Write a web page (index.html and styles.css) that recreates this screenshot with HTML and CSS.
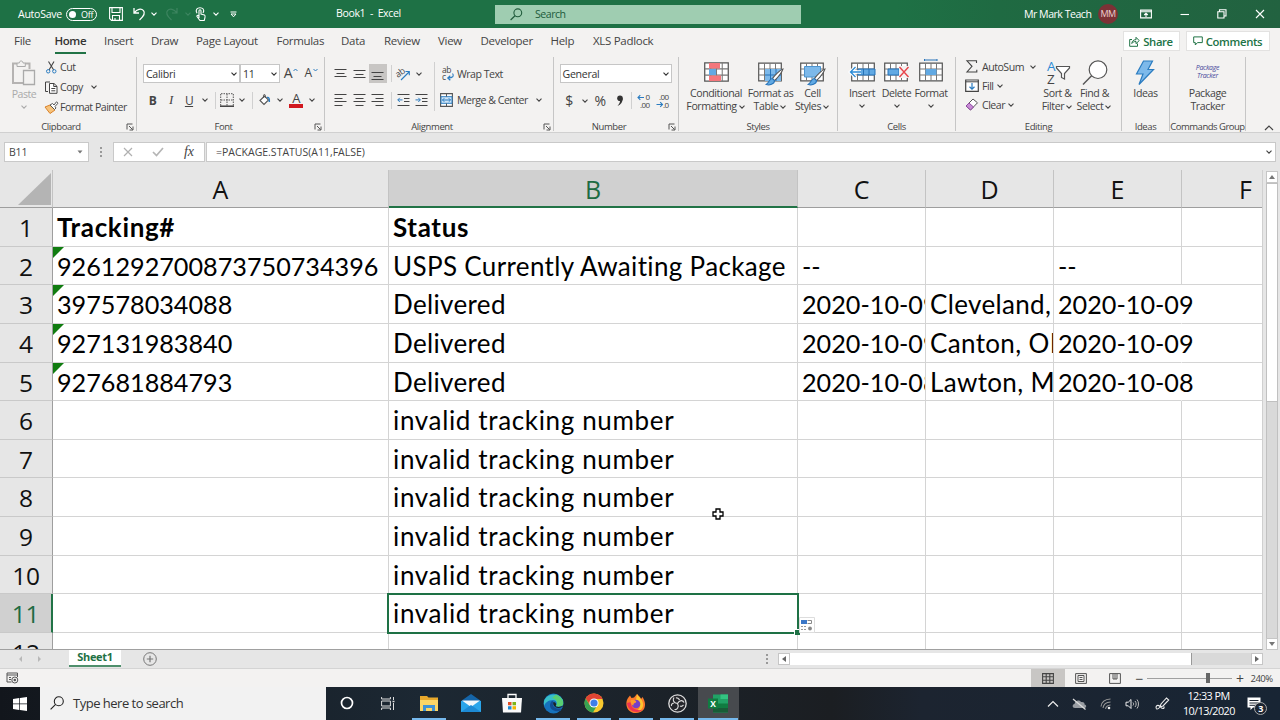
FILE: index.html
```html
<!DOCTYPE html>
<html lang="en">
<head>
    <meta charset="UTF-8">
    <meta name="viewport" content="width=device-width, initial-scale=1.0">
    <title>Book1 - Excel</title>
    <link rel="stylesheet" href="styles.css">
</head>
<body>
    <svg class="defs">
      <symbol id="chev" viewBox="0 0 8 8"><path d="M1.5 2.7 L4 5.2 L6.5 2.7" fill="none" stroke="currentColor" stroke-width="1.1"/></symbol>
      <symbol id="launch" viewBox="0 0 8 8"><path d="M1 6.5V1H6.5 M3 3L6.6 6.6 M7 3.5V7H3.5" fill="none" stroke="#555" stroke-width="1"/></symbol>
      <symbol id="grid" viewBox="0 0 24 19"><path d="M.7 .7H23.3V18.3H.7Z" fill="#fff" stroke="#555" stroke-width="1.2"/><path d="M.7 6.5H23.3M.7 12.5H23.3M6.5 .7V18.3M12 .7V18.3M17.5 .7V18.3" stroke="#777" stroke-width="1"/></symbol>
      <symbol id="brush" viewBox="0 0 18 17"><path d="M17 1C14 2 9 7 7 10L9 12C12 9 16 4 17 1Z" fill="#fff" stroke="#555"/><path d="M7 10C4 10 4 14 1 15.5C4 17 9 15 9 12Z" fill="#61a9e3" stroke="#2673b8"/></symbol>
    </svg>

    <div class="titlebar">
      <span class="autosave">AutoSave</span>
      <span class="toggle"><i></i>Off</span>
      <svg class="t-save" width="14" height="14" viewBox="0 0 14 14"><path d="M.6 .6H13.4V13.4H2.5L.6 11.5ZM3 .6V5.5H11V.6M3.5 13V8.5H10.5V13M6 11V13" fill="none" stroke="#fff" stroke-width="1.1"/></svg>
      <svg class="t-undo" width="13" height="14" viewBox="0 0 13 14"><path d="M1 1V6H6M1.3 5.7C4 2.3 8 1 10.5 3.6C12.5 6 11.5 8.5 6.5 13" fill="none" stroke="#fff" stroke-width="1.3"/></svg>
      <svg class="t-chev1" width="8" height="8"><use href="#chev"/></svg>
      <svg class="t-redo" width="13" height="14" viewBox="0 0 13 14"><path d="M12 1V6H7M11.7 5.7C9 2.3 5 1 2.5 3.6C.5 6 1.5 8.5 6.5 13" fill="none" stroke="#3d8560" stroke-width="1.2"/></svg>
      <svg class="t-chev2" width="8" height="8"><use href="#chev"/></svg>
      <svg class="t-touch" width="12" height="15" viewBox="0 0 12 15"><path d="M4 11V3.8C4 2.3 6 2.3 6 3.8V7L9.5 8C10.5 8.4 10 11 9.2 13.5H5L2 9.5C1.5 8.2 3 8 4 9.3M2 6.3C-.2 2.5 2.5 .7 5 .7S10 2.5 8 6" fill="none" stroke="#fff" stroke-width="1.1"/></svg>
      <svg class="t-chev1 touch" width="8" height="8"><use href="#chev"/></svg>
      <svg class="t-custom" width="7" height="7" viewBox="0 0 7 7"><path d="M.5 1H6.5M1 3H6L3.5 5.8Z" fill="none" stroke="#fff"/></svg>
      <span class="doc-name">Book1&nbsp; -&nbsp; Excel</span>
      <div class="search">
        <svg width="13" height="13" viewBox="0 0 13 13"><circle cx="7.8" cy="4.8" r="3.9" fill="none" stroke="#215c3c" stroke-width="1.1"/><path d="M5 7.7L.6 12" stroke="#215c3c" stroke-width="1.2"/></svg>
        <span>Search</span>
      </div>
      <span class="user">Mr Mark Teach</span>
      <span class="avatar">MM</span>
      <div class="window-buttons">
        <svg width="12" height="10" viewBox="0 0 12 10"><path d="M.6 1.1H11.4V8.9H.6ZM.6 2.8H11.4M6 8V4.5M4.2 6L6 4.2L7.8 6" fill="none" stroke="#fff" stroke-width="1.1"/></svg>
        <svg width="10" height="10" viewBox="0 0 10 10"><path d="M.5 5.5H9" stroke="#fff" stroke-width="1.1"/></svg>
        <svg width="10" height="10" viewBox="0 0 10 10"><path d="M.8 2.7H7V9H.8ZM2.5 2.5V.8H9V7H7.2" fill="none" stroke="#fff" stroke-width="1.1"/></svg>
        <svg width="10" height="10" viewBox="0 0 10 10"><path d="M1 1L9 9M9 1L1 9" stroke="#fff" stroke-width="1.1"/></svg>
      </div>
    </div>

    <div class="tabs">
      <div class="tab-list">
        <span>File</span><span class="active">Home</span><span>Insert</span><span>Draw</span><span>Page Layout</span><span>Formulas</span><span>Data</span><span>Review</span><span>View</span><span>Developer</span><span>Help</span><span>XLS Padlock</span>
      </div>
      <button class="share"><svg width="11" height="11" viewBox="0 0 11 11"><path d="M3 3.5H.7V10.3H8.5V7.5M2.8 7.5C3 5 4.5 3.7 7 3.7V1.3L10.2 4.6L7 7.7V5.5C5 5.5 4 6 2.8 7.5" fill="none" stroke="#217346" stroke-width="1"/></svg>Share</button>
      <button class="comments"><svg width="10" height="10" viewBox="0 0 10 10"><path d="M.7 .9H9.3V6.6H4.5L2.3 9V6.6H.7Z" fill="none" stroke="#217346"/></svg>Comments</button>
    </div>

    <div class="ribbon">
      <div class="group clipboard">
        <div class="group-body">
          <div class="paste">
            <svg width="26" height="26" viewBox="0 0 26 26"><path d="M6 3.5H2V23H12M14 3.5H18.5V9" fill="none" stroke="#b5b3b2" stroke-width="2"/><path d="M6 6.5V3H8.3C8.3 .3 12 .3 12 3H14.3V6.5Z" fill="#f3f2f1" stroke="#aaa"/><path d="M12.5 10.5H23.5V24.5H12.5Z" fill="#f3f2f1" stroke="#aaa" stroke-width="1.3"/></svg>
            <span>Paste</span>
            <svg width="8" height="8"><use href="#chev"/></svg>
          </div>
          <div class="clip-list">
            <div><svg width="16" height="13" viewBox="0 0 16 13"><path d="M4.5 .5L9.7 9M10 .5L5 9" stroke="#444" stroke-width="1.1"/><circle cx="4.2" cy="10.3" r="1.7" fill="none" stroke="#2b7cc0"/><circle cx="10.3" cy="10.3" r="1.7" fill="none" stroke="#2b7cc0"/></svg>Cut</div>
            <div><svg width="16" height="13" viewBox="0 0 16 13"><path d="M4 10.5H1.5V1H6" fill="none" stroke="#444"/><path d="M5.5 2.5H10L13 5.3V12.3H5.5ZM9.7 2.5V5.5H13M7.3 7.5H11.3M7.3 9.8H11.3" fill="#fff" stroke="#444"/></svg>Copy<svg class="copy-chev" width="8" height="8"><use href="#chev"/></svg></div>
            <div><svg width="16" height="13" viewBox="0 0 16 13"><path d="M1 6L6 4L11 9L6 12.5Z" fill="#f7c37b" stroke="#d9822b"/><path d="M6 4L8.5 2.5L10 4L12.5 .8L14 2.2L11 5.5L12 7L10.5 8.5Z" fill="#fff" stroke="#555"/></svg>Format Painter</div>
          </div>
        </div>
        <div class="label">Clipboard<svg width="8" height="8"><use href="#launch"/></svg></div>
      </div>

      <div class="group font">
        <div class="group-body rows">
          <div class="row font-row1">
            <div class="select">Calibri<svg width="8" height="8"><use href="#chev"/></svg></div>
            <div class="select">11<svg width="8" height="8"><use href="#chev"/></svg></div>
            <span class="grow">A<svg width="5" height="4" viewBox="0 0 5 4"><path d="M.5 3L2.5 1L4.5 3" fill="none" stroke="#2b7cc0"/></svg></span>
            <span class="grow shrink">A<svg width="5" height="4" viewBox="0 0 5 4"><path d="M.5 1L2.5 3L4.5 1" fill="none" stroke="#2b7cc0"/></svg></span>
          </div>
          <div class="row font-row2">
            <b>B</b><i class="ital">I</i><u>U</u><svg width="8" height="8"><use href="#chev"/></svg>
            <span class="sep"></span>
            <svg width="14" height="14" viewBox="0 0 14 14"><path d="M1 .7H13M.7 1V13M13.3 1V13M7 1V13M1 7H13" fill="none" stroke="#555" stroke-dasharray="1.5 1"/><path d="M0 13.2H14" stroke="#333" stroke-width="1.4"/></svg>
            <svg width="8" height="8"><use href="#chev"/></svg>
            <span class="sep"></span>
            <svg width="12" height="12" viewBox="0 0 12 12"><path d="M1 6.5L5.5 2L9.5 6L5 10.5Z" fill="#fff" stroke="#555" stroke-width="1.1"/><path d="M4.5 4V1.3C4.5 .3 6.3 .3 6.3 1.3V4" fill="none" stroke="#555"/><path d="M8 3.5C10 3 10.5 4.5 10.3 8" fill="none" stroke="#2b7cc0" stroke-width="1.5"/></svg>
            <svg width="8" height="8"><use href="#chev"/></svg>
            <span class="font-color">A</span>
            <svg width="8" height="8"><use href="#chev"/></svg>
          </div>
        </div>
        <div class="label">Font<svg width="8" height="8"><use href="#launch"/></svg></div>
      </div>

      <div class="group alignment">
        <div class="group-body rows">
          <div class="row align-row">
            <svg width="13" height="12" viewBox="0 0 13 12"><path d="M.5 1.5H12.5M2.5 5.5H10.5M.5 8.5H12.5" stroke="#444"/></svg>
            <svg width="13" height="12" viewBox="0 0 13 12"><path d="M.5 2.5H12.5M2.5 6.5H10.5M.5 9.5H12.5" stroke="#444"/></svg>
            <span class="picked"><svg width="13" height="12" viewBox="0 0 13 12"><path d="M.5 4.5H12.5M2.5 8.5H10.5M.5 11.5H12.5" stroke="#444"/></svg></span>
            <span class="sep"></span>
            <svg width="15" height="14" viewBox="0 0 15 14"><text x="0" y="9" font-size="9" fill="#444" transform="rotate(-35 4 7)">ab</text><path d="M5 13L13 5M9.5 4.5H13.3V8.3" fill="none" stroke="#2b7cc0" stroke-width="1.1"/></svg>
            <svg width="8" height="8"><use href="#chev"/></svg>
            <span></span>
            <svg width="14" height="14" viewBox="0 0 14 14"><text x="1" y="6" font-size="8.5" fill="#444">ab</text><text x="1" y="13" font-size="8.5" fill="#444">c</text><path d="M11.5 6.5C13.5 9 12 11 7 11M9.3 8.7L6.8 11L9.3 13.3" fill="none" stroke="#2b7cc0" stroke-width="1.2"/></svg>
            <span class="txt">Wrap Text</span>
          </div>
          <div class="row align-row">
            <svg width="13" height="12" viewBox="0 0 13 12"><path d="M.5 .5H12.5M.5 4.5H8.5M.5 7.5H12.5M.5 11.5H8.5" stroke="#444"/></svg>
            <svg width="13" height="12" viewBox="0 0 13 12"><path d="M.5 .5H12.5M2.5 4.5H10.5M.5 7.5H12.5M2.5 11.5H10.5" stroke="#444"/></svg>
            <svg width="13" height="12" viewBox="0 0 13 12"><path d="M.5 .5H12.5M4.5 4.5H12.5M.5 7.5H12.5M4.5 11.5H12.5" stroke="#444"/></svg>
            <span class="sep"></span>
            <svg width="13" height="12" viewBox="0 0 13 12"><path d="M.5 .5H12.5M7 4.5H12.5M7 7.5H12.5M.5 11.5H12.5" stroke="#444"/><path d="M5.5 5.9H.8M2.8 3.8L.8 5.9L2.8 8" fill="none" stroke="#2b7cc0"/></svg>
            <svg class="indent" width="13" height="12" viewBox="0 0 13 12"><path d="M.5 .5H12.5M7 4.5H12.5M7 7.5H12.5M.5 11.5H12.5" stroke="#444"/><path d="M.5 5.9H5.3M3.3 3.8L5.3 5.9L3.3 8" fill="none" stroke="#2b7cc0"/></svg>
            <span></span>
            <svg class="merge-icon" width="13" height="14" viewBox="0 0 13 14"><path d="M.6 .6H12.4V13.4H.6Z" fill="#fff" stroke="#555" stroke-width="1.1"/><path d="M1 3.7H12V10.3H1Z" fill="#cfe5f7" stroke="#2b7cc0"/><path d="M6.5 1V3.5M6.5 10.5V13" stroke="#555"/><path d="M2.5 7H10.5M4.3 5.2L2.5 7L4.3 8.8M8.7 5.2L10.5 7L8.7 8.8" fill="none" stroke="#2b7cc0"/></svg>
            <span class="txt">Merge &amp; Center</span>
            <svg width="8" height="8"><use href="#chev"/></svg>
          </div>
          <span class="tall-sep"></span>
        </div>
        <div class="label">Alignment<svg width="8" height="8"><use href="#launch"/></svg></div>
      </div>

      <div class="group number">
        <div class="group-body rows">
          <div class="row"><div class="select general">General<svg width="8" height="8"><use href="#chev"/></svg></div></div>
          <div class="row number-row">
            <span class="sym">$</span><svg width="8" height="8"><use href="#chev"/></svg><span class="sym">%</span>
            <svg width="8" height="12" viewBox="0 0 8 12"><circle cx="4" cy="3.3" r="2.8" fill="#333"/><path d="M6.8 3.3C6.8 7 5 9.5 1.5 11C3.3 9 4 7.5 4 5.5Z" fill="#333"/></svg>
            <span class="sep"></span>
            <svg width="14" height="14" viewBox="0 0 14 14"><text x="8.5" y="6" font-size="8" fill="#444">0</text><text x="3" y="13.5" font-size="8" fill="#444">.00</text><path d="M7 3.5H1M3.3 1.2L1 3.5L3.3 5.8" fill="none" stroke="#2b7cc0" stroke-width="1.1"/></svg>
            <svg width="14" height="14" viewBox="0 0 14 14"><text x="3" y="6" font-size="8" fill="#444">.00</text><text x="7" y="13.5" font-size="8" fill="#444">.0</text><path d="M.5 10.5H6.5M4.2 8.2L6.5 10.5L4.2 12.8" fill="none" stroke="#2b7cc0" stroke-width="1.1"/></svg>
          </div>
        </div>
        <div class="label">Number<svg width="8" height="8"><use href="#launch"/></svg></div>
      </div>

      <div class="group styles">
        <div class="group-body bigs">
          <div class="big">
            <svg width="25" height="26" viewBox="0 0 25 26"><use href="#grid" x="0" y="2" width="25" height="20"/><path d="M5 3H16V8.5H5ZM5 15.5H17V21H5Z" fill="#f4777c"/><path d="M5 9H12V15H5Z" fill="#61a9e3"/></svg>
            Conditional<br><span>Formatting<svg width="8" height="8"><use href="#chev"/></svg></span>
          </div>
          <div class="big">
            <svg width="26" height="26" viewBox="0 0 26 26"><use href="#grid" x="0" y="2" width="24" height="20"/><path d="M7 9H23V21H7Z" fill="#7db9ea"/><path d="M12.5 9V21M18 9V21M7 15H23" stroke="#2673b8"/><use href="#brush" x="7" y="8" width="19" height="18"/></svg>
            Format as<br><span>Table<svg width="8" height="8"><use href="#chev"/></svg></span>
          </div>
          <div class="big">
            <svg width="26" height="26" viewBox="0 0 26 26"><use href="#grid" x="0" y="2" width="24" height="20"/><path d="M4.5 6.5H20.5V17H4.5Z" fill="#7db9ea" stroke="#4d94cf"/><use href="#brush" x="7" y="8" width="19" height="18"/></svg>
            Cell<br><span>Styles<svg width="8" height="8"><use href="#chev"/></svg></span>
          </div>
        </div>
        <div class="label">Styles</div>
      </div>

      <div class="group cells">
        <div class="group-body bigs">
          <div class="big">
            <svg width="27" height="26" viewBox="0 0 27 26"><use href="#grid" x="2" y="2" width="24" height="20"/><path d="M9 9H26V15H9Z" fill="#61a9e3" stroke="#2673b8"/><path d="M14.5 9V15M20 9V15" stroke="#2673b8"/><path d="M12 12H2M6.5 7L1.5 12L6.5 17" fill="none" stroke="#fff" stroke-width="3.5"/><path d="M12 12H2M6.5 7L1.5 12L6.5 17" fill="none" stroke="#2b8bd6" stroke-width="1.3"/></svg>
            Insert<svg class="only" width="8" height="8"><use href="#chev"/></svg>
          </div>
          <div class="big">
            <svg width="25" height="26" viewBox="0 0 25 26"><use href="#grid" x="0" y="2" width="24" height="20"/><path d="M4 9H15V15H4Z" fill="#61a9e3" stroke="#2673b8"/><path d="M15 6H25V18H15Z" fill="#f3f2f1"/><path d="M15.5 7L24.5 17M24.5 7L15.5 17" stroke="#e8454b" stroke-width="1.4"/></svg>
            Delete<svg class="only" width="8" height="8"><use href="#chev"/></svg>
          </div>
          <div class="big">
            <svg width="24" height="26" viewBox="0 0 24 26"><use href="#grid" x="0" y="2" width="24" height="20"/><path d="M6.5 9H17.5V15H6.5Z" fill="#61a9e3"/><path d="M5.5 -1V1M18 -1V1M5.5 0H18" stroke="#2673b8"/></svg>
            Format<svg class="only" width="8" height="8"><use href="#chev"/></svg>
          </div>
        </div>
        <div class="label">Cells</div>
      </div>

      <div class="group editing">
        <div class="group-body">
          <div class="edit-list">
            <div><svg width="14" height="13" viewBox="0 0 14 13"><path d="M11.5 3V.8H2L7 6.3L2 12H11.8V9.8" fill="none" stroke="#444" stroke-width="1.1"/></svg>AutoSum<svg class="sum-chev" width="8" height="8"><use href="#chev"/></svg></div>
            <div><svg width="14" height="13" viewBox="0 0 14 13"><path d="M.7 1H13.3V12.3H.7Z" fill="#fff" stroke="#444" stroke-width="1.2"/><path d="M.7 2.8H13.3" stroke="#444"/><path d="M7 4V10M4.5 7.8L7 10.2L9.5 7.8" fill="none" stroke="#2b7cc0" stroke-width="1.2"/></svg>Fill<svg width="8" height="8"><use href="#chev"/></svg></div>
            <div><svg width="14" height="13" viewBox="0 0 14 13"><path d="M1 8L8 1L12.5 4.8L5.5 12Z" fill="#fff" stroke="#555"/><path d="M1 8L4 5L8.5 9L5.5 12Z" fill="#c88bd6" stroke="#8e4ba0"/></svg>Clear<svg width="8" height="8"><use href="#chev"/></svg></div>
          </div>
          <div class="big sort">
            <svg width="26" height="26" viewBox="0 0 26 26"><text x="2" y="11" font-size="13.5" fill="#2b8bd6">A</text><text x="2" y="23.5" font-size="13.5" fill="#444">Z</text><path d="M11.500 6.500H24.500V8L19.500 13.500V19L16.500 17.500V13.500L11.500 8Z" fill="#fff" stroke="#555" stroke-width="1.2"/></svg>
            Sort &amp;<br><span>Filter<svg width="8" height="8"><use href="#chev"/></svg></span>
          </div>
          <div class="big find">
            <svg width="26" height="26" viewBox="0 0 26 26"><circle cx="16" cy="9.7" r="8.8" fill="#fff" stroke="#555" stroke-width="1.2"/><path d="M9.6 15.8L1 24.5" stroke="#555" stroke-width="1.4"/></svg>
            Find &amp;<br><span>Select<svg width="8" height="8"><use href="#chev"/></svg></span>
          </div>
        </div>
        <div class="label">Editing</div>
      </div>

      <div class="group ideas">
        <div class="group-body bigs">
          <div class="big">
            <svg width="20" height="26" viewBox="0 0 20 26"><path d="M8.5 1H17.5L13 9.5H18.5L4 24.5L8 14H1.5Z" fill="#7db9ea" stroke="#2b7cc0" stroke-width="1.2"/></svg>
            Ideas
          </div>
        </div>
        <div class="label">Ideas</div>
      </div>

      <div class="group commands">
        <div class="group-body bigs">
          <div class="big">
            <div class="pkg-logo"><div>Package</div><div>Tracker</div></div>
            <div>Package</div><div>Tracker</div>
          </div>
        </div>
        <div class="label">Commands Group</div>
      </div>
      <svg class="collapse" width="10" height="6" viewBox="0 0 10 6"><path d="M1 5L5 1L9 5" fill="none" stroke="#444" stroke-width="1.2"/></svg>
    </div>

    <div class="formula-bar">
      <div class="name-box">B11<svg width="6" height="4" viewBox="0 0 6 4"><path d="M.5 .5H5.5L3 3.5Z" fill="#777"/></svg></div>
      <span class="dots"></span>
      <div class="fx">
        <svg width="10" height="10" viewBox="0 0 10 10"><path d="M1 1L9 9M9 1L1 9" stroke="#b0b0b0" stroke-width="1.2"/></svg>
        <svg width="12" height="10" viewBox="0 0 12 10"><path d="M1 5L4.5 8.5L11 1" fill="none" stroke="#b5b5b5" stroke-width="1.7"/></svg>
        <i>fx</i>
      </div>
      <div class="formula"><span>=PACKAGE.STATUS(A11,FALSE)</span><svg width="8" height="8"><use href="#chev"/></svg></div>
    </div>

    <div class="sheet">
      <div class="grid">
        <div class="grid-row head">
          <div class="num corner"><svg width="33" height="32"><path d="M33 0V32H0Z" fill="#b4b4b4"/></svg></div>
          <div>A</div><div class="sel">B</div><div>C</div><div>D</div><div>E</div><div>F</div>
        </div>
        <div id="rows"></div>
      </div>
      <div class="vscroll">
        <div class="sb-btn"><svg width="6" height="4"><path d="M0 4L3 0L6 4Z" fill="#777"/></svg></div>
        <div class="vthumb"></div>
        <div class="sb-btn"><svg width="6" height="4"><path d="M0 0L3 4L6 0Z" fill="#777"/></svg></div>
      </div>
      <svg class="cursor" width="12" height="12" viewBox="0 0 12 12"><path d="M4 1H8V4H11V8H8V11H4V8H1V4H4Z" fill="#fff" stroke="#000" stroke-width="1.3"/></svg>
    </div>

    <div class="sheet-tabs">
      <svg class="nav" width="24" height="6" viewBox="0 0 24 6"><path d="M4 0V6L1 3Z M20 0V6L23 3Z" fill="#b8b8b8"/></svg>
      <span class="sheet-tab">Sheet1</span>
      <svg class="add" width="14" height="14" viewBox="0 0 14 14"><circle cx="7" cy="7" r="6.3" fill="none" stroke="#777" stroke-width="1"/><path d="M7 3.8V10.2M3.8 7H10.2" stroke="#777" stroke-width="1.2"/></svg>
      <span class="dots"></span>
      <div class="hscroll">
        <div class="sb-btn"><svg width="4" height="6"><path d="M4 0V6L0 3Z" fill="#666"/></svg></div>
        <div class="hthumb"></div>
        <div class="sb-btn"><svg width="4" height="6"><path d="M0 0V6L4 3Z" fill="#666"/></svg></div>
      </div>
    </div>

    <div class="status">
      <svg class="macro" width="13" height="12" viewBox="0 0 13 12"><path d="M11.5 5V1H1V10H5.5M1 3H11.5M3 5.5H5M3 7.5H5" fill="none" stroke="#555"/><circle cx="8.8" cy="8" r="3" fill="#f3f2f1" stroke="#555"/><circle cx="8.8" cy="8" r="1.3" fill="#555"/></svg>
      <div class="view on"><svg width="12" height="11" viewBox="0 0 12 11"><path d="M.6 .6H11.4V10.4H.6ZM.6 3.8H11.4M.6 7.2H11.4M4.2 .6V10.4M7.8 .6V10.4" fill="none" stroke="#444" stroke-width="1.1"/></svg></div>
      <div class="view"><svg width="12" height="11" viewBox="0 0 12 11"><path d="M.6 .6H11.4V10.4H.6ZM3 2.5H9V8.5H3ZM4.5 4.5H7.5M4.5 6.5H7.5" fill="none" stroke="#555"/></svg></div>
      <div class="view"><svg width="12" height="11" viewBox="0 0 12 11"><path d="M.6 .6H11.4V10.4H.6ZM4 .6V6H8V.6M6 .6V6" fill="none" stroke="#555"/></svg></div>
      <div class="zoom"><span>−</span><div class="slider"><i></i></div><span>+</span></div>
      <span class="pct">240%</span>
    </div>

    <div class="taskbar">
      <div class="start"><svg width="14" height="14" viewBox="0 0 14 14"><path d="M0 2L6.3 1.1V6.6H0ZM7 1L14 0V6.6H7ZM0 7.3H6.3V12.9L0 12ZM7 7.3H14V14L7 13Z" fill="#fff"/></svg></div>
      <div class="task-search"><svg width="14" height="14" viewBox="0 0 14 14"><circle cx="8.8" cy="5.2" r="4.5" fill="none" stroke="#222" stroke-width="1.1"/><path d="M5.6 8.4L.6 13.4" stroke="#222" stroke-width="1.1"/></svg>Type here to search</div>
      <div class="apps">
        <div><svg width="14" height="14"><circle cx="7" cy="7" r="5.5" fill="none" stroke="#fff" stroke-width="1.7"/></svg></div>
        <div><svg width="14" height="13" viewBox="0 0 14 13"><path d="M.6 0V2H9.4V0M.6 4H9.4V9H.6ZM.6 13V11H9.4V13M12.5 0V3M12.5 6V13" fill="none" stroke="#ddd"/><path d="M11.5 4.5H13.5" stroke="#ddd" stroke-width="1.5"/></svg></div>
        <div class="open"><svg width="20" height="17" viewBox="0 0 20 17"><path d="M1 1H8L9.5 2.5H19V15H1Z" fill="#e8a92c"/><path d="M1 5H19V16H1Z" fill="#fbd667"/><path d="M4 16V10H16V16H13V13H7V16Z" fill="#3f93d6"/></svg></div>
        <div><svg width="20" height="19" viewBox="0 0 20 19"><path d="M0 7L10 0L20 7V10H0Z" fill="#1565a8"/><path d="M0 7H20V18H0Z" fill="#2aa5ea"/><path d="M1 6.5H19L10 13Z" fill="#f1f7fb"/><path d="M0 18L10 11L20 18Z" fill="#1d8ad4"/></svg></div>
        <div><svg width="20" height="20" viewBox="0 0 20 20"><path d="M6 6V1.5H14V6" fill="none" stroke="#fff" stroke-width="1.3"/><path d="M0 5H20L19 19.5H1Z" fill="#fafafa"/><path d="M6 9H9.5V12.3H6Z" fill="#e34f26"/><path d="M10.5 9H14V12.3H10.5Z" fill="#7cb518"/><path d="M6 13.2H9.5V16.5H6Z" fill="#1d8ad4"/><path d="M10.5 13.2H14V16.5H10.5Z" fill="#f5b700"/></svg></div>
        <div class="open"><svg width="21" height="21" viewBox="0 0 21 21"><circle cx="10.5" cy="10.5" r="10" fill="#1672bd"/><path d="M1 8C3 1 15-2 20 7C21 12 18 14 13 13C15 10 13 7 10 7C5 7 2 10 1 13Z" fill="#39c0c8"/><path d="M13 1.5C19 4 21 9 20 12C18 14 15 14 13 13C15 10 14 6 9 5Z" fill="#59cf72"/><path d="M8 9C5 14 9 19 16 18C19 17 18 15 16 15.5C12 16 9 13 10 10C11 8 9 7 8 9Z" fill="#124c92"/><path d="M10.5 9C9.5 11 11 14.5 15.5 15C18 15 19.5 14 20.5 12.5C18 14 14 14.5 12.5 13C14 12 13 9 10.5 9Z" fill="#1b2027"/></svg></div>
        <div class="open"><svg width="20" height="20" viewBox="0 0 20 20"><circle cx="10" cy="10" r="9.5" fill="#f8c92f"/><path d="M1.6 5.5A9.5 9.5 0 0 1 18.5 6H10L6 12Z" fill="#e14434"/><path d="M1.6 5.5A9.5 9.5 0 0 0 9 19.5L13 12.5H6Z" fill="#37a153"/><circle cx="10" cy="10" r="4.6" fill="#fff"/><circle cx="10" cy="10" r="3.6" fill="#3f7ee8"/></svg></div>
        <div class="open"><svg width="20" height="21" viewBox="0 0 20 21"><path d="M2 5L4 2.5L5.5 5L8 4.5L11 1L14 4L15 6L16.5 4C19 8 20 12 18 16C15 21 6 21.5 2.5 17C-.5 13 0 8 2 5Z" fill="#fb7a2c"/><path d="M11 1C13 5 18 7 17 13C16 17 13 18.5 10 18.5C18 13 12 8 10 7Z" fill="#fdc52e"/><path d="M1 10C2 19 12 21 16 17C9 18 4 14 5 9Z" fill="#ee3353"/><circle cx="10" cy="11" r="4.3" fill="#7440c8"/><path d="M5 7C8 6 11 8 10 9.5C8 10 7 11 7.5 12.5C5 12 4 9 5 7Z" fill="#fd9b2c"/></svg></div>
        <div class="open"><svg width="19" height="19" viewBox="0 0 19 19"><circle cx="9.5" cy="9.5" r="8.7" fill="#25262b" stroke="#ddd" stroke-width="1.3"/><path d="M9.5 9.5C5 9 4.5 5.5 6 3.5M9.5 9.5C11.5 5.5 15 6 16 8.5M9.5 9.5C11.5 13 9 16 6.5 15.5M6 9C4.5 9 3 10.5 3.5 12M11.5 6C11 4.5 9 3.5 8 4M12 12C14 13 15 11.5 15.5 11" fill="none" stroke="#ddd" stroke-width="1.2"/></svg></div>
        <div class="open current"><svg width="20" height="19" viewBox="0 0 20 19"><path d="M5 .5H20V18.5H5Z" fill="#21a366"/><path d="M12.5 .5H20V5H12.5Z" fill="#33c481"/><path d="M5 9.5H12.5V14H5ZM12.5 9.5H20V14H12.5Z" fill="#107c41"/><path d="M5 14H20V18.5H5Z" fill="#185c37"/><path d="M0 4.5H10V14.5H0Z" fill="#107c41"/><text x="2.2" y="12.6" font-size="8.5" font-weight="700" fill="#fff">X</text></svg></div>
      </div>
      <div class="tray">
        <svg width="12" height="8" viewBox="0 0 12 8"><path d="M1 6.5L6 1.5L11 6.5" fill="none" stroke="#eee" stroke-width="1.2"/></svg>
        <svg width="15" height="12" viewBox="0 0 15 12"><path d="M3 10C0 10 0 6.5 2.5 6C3 2.5 7 1.5 9 4C11.5 3.5 13 5 12.5 6.5C15 7 14.5 10 12.5 10Z" fill="#999da3"/><path d="M1 1L13.5 11.5" stroke="#ddd" stroke-width="1.2"/></svg>
        <svg width="12" height="12" viewBox="0 0 12 12"><path d="M1 8.5C1.5 4 5 1.3 10.5 1M3 10C3.5 6.5 6 4.2 10.5 4M5.5 10.8C6 8.8 7.5 7.2 10.5 7" fill="none" stroke="#999" stroke-width="1.1"/><circle cx="9" cy="10" r="1.3" fill="#eee"/></svg>
        <svg width="14" height="12" viewBox="0 0 14 12"><path d="M1 4.2H3.3L6 1.5V10.5L3.3 7.8H1Z" fill="none" stroke="#eee"/><path d="M8 4.5C8.8 5.3 8.8 6.7 8 7.5M10 3C11.5 4.5 11.5 7.5 10 9M12 1.5C14 4 14 8 12 10.5" fill="none" stroke="#bbb"/></svg>
        <svg class="pen" width="15" height="14" viewBox="0 0 15 14"><path d="M5 10L6 7L11.5 1L13.7 3L8 9ZM5 10C2 13.5 .5 12 1.2 9.5C1.7 8 3.5 8 5 9.5C7 12 9.5 12.5 9 9.5" fill="none" stroke="#eee" stroke-width="1.1"/></svg>
        <div class="clock">12:33 PM<br>10/13/2020</div>
        <div class="notif"><svg width="14" height="13" viewBox="0 0 14 13"><path d="M.5 .5H13.5V10.5H6L3.5 13V10.5H.5Z" fill="#fff"/><path d="M2.5 3.5H11.5M2.5 6H11.5M2.5 8.3H8" stroke="#1b2431"/></svg><b>3</b></div>
      </div>
    </div>

    <script>
      let invalid = "invalid tracking number";
      let listData = [
        ["Tracking#", "Status"],
        ["9261292700873750734396", "USPS Currently Awaiting Package", "--", "", "--"],
        ["397578034088", "Delivered", "2020-10-09", "Cleveland, OH", "2020-10-09"],
        ["927131983840", "Delivered", "2020-10-09", "Canton, OH", "2020-10-09"],
        ["927681884793", "Delivered", "2020-10-08", "Lawton, MI", "2020-10-08"],
        ["", invalid], ["", invalid], ["", invalid], ["", invalid], ["", invalid], ["", invalid],
        []
      ];
      function renderRows(list) {
        let data = "";
        for (let i = 0; i < list.length; i++) {
          data += `<div class="grid-row r${i + 1}"><div class="num">${i + 1}</div>`;
          for (let c = 0; c < 6; c++) {
            let value = list[i][c] || "";
            let cls = "cell c" + c;
            if (c == 0 && i > 0 && value) cls += " flag";
            if (c == 4 && value.length > 2) cls += " spill";
            if (/[a-z]/.test(value)) cls += " words";
            if (value == invalid) cls += " invalid";
            data += `<div class="${cls}">${value ? `<span>${value}</span>` : ""}</div>`;
          }
          data += "</div>";
        }
        document.getElementById("rows").innerHTML = data;
        // active cell outline and the auto fill button
        document.querySelector(".r11 .c1").innerHTML += `
          <div class="active-cell"></div>
          <svg class="autofill" width="16" height="16" viewBox="0 0 16 16"><path d="M.5 .5H15.5V15.5H.5Z" fill="#fff" stroke="#ddd"/><path d="M2 3H8V7H2Z" fill="#3c78c8"/><path d="M8.5 3.5H12.5V6.5H8.5" fill="none" stroke="#888"/><path d="M2 9.5H8M2 12.5H8" stroke="#999" stroke-dasharray="2 1"/><circle cx="11" cy="11.5" r="1.9" fill="#888"/></svg>`;
      }
      renderRows(listData);
    </script>
</body>
</html>
```
FILE: styles.css
```css
* {
  box-sizing: border-box;
}
body {
  margin: 0;
  width: 1280px;
  height: 720px;
  overflow: hidden;
  display: flex;
  flex-direction: column;
  font-family: "Open Sans", "Noto Sans", sans-serif;
  font-size: 10.6px;
  letter-spacing: -0.5px;
  color: #444;
  background: #e6e6e6;
}
svg {
  display: block;
  flex: none;
  overflow: visible;
}
.defs {
  position: absolute;
  width: 0;
  height: 0;
}
button {
  font: inherit;
  letter-spacing: inherit;
}

/* title bar */
.titlebar {
  height: 28px;
  flex: none;
  display: flex;
  align-items: center;
  color: #fff;
  background: linear-gradient(90deg, #1e7145 70%, #1f6a42 78%, #226240);
}
.autosave {
  width: 48px;
  margin-left: 18px;
  letter-spacing: -0.3px;
}
.toggle {
  width: 31px;
  height: 13px;
  border: 1px solid #fff;
  border-radius: 7px;
  font-size: 9px;
  letter-spacing: -0.3px;
  display: flex;
  align-items: center;
}
.toggle i {
  width: 7px;
  height: 7px;
  margin: 0 5px 0 2px;
  border-radius: 50%;
  background: #fff;
}
.t-save { margin-left: 12px; }
.t-undo { margin-left: 10px; }
.t-chev1 { margin-left: 4px; }
.t-redo { margin-left: 7px; }
.t-chev2 { margin-left: 6px; color: #3d8560; }
.t-touch { margin-left: 3px; }
.t-chev1.touch { margin-left: 5px; }
.t-custom { margin-left: 10px; }
.doc-name {
  width: 159px;
  margin-left: 99px;
  margin-top: -2px;
  letter-spacing: -0.4px;
}
.search {
  width: 306px;
  height: 19px;
  display: flex;
  align-items: center;
  padding-left: 15px;
  color: #215c3c;
  background: #9fcdb1;
}
.search span {
  margin-left: 12px;
}
.user {
  width: 74px;
  margin-left: 223px;
}
.avatar {
  width: 20px;
  height: 20px;
  line-height: 20px;
  border-radius: 50%;
  text-align: center;
  font-size: 9px;
  color: #eccfcf;
  background: #7b3236;
}
.window-buttons {
  display: flex;
  justify-content: space-between;
  width: 125px;
  margin-left: 22px;
}

/* tabs */
.tabs {
  height: 28px;
  flex: none;
  display: flex;
  align-items: center;
  padding-bottom: 2px;
  background: #f3f2f1;
}
.tab-list {
  width: 1123px;
  padding-left: 14px;
  display: grid;
  grid-template-columns: 41px 49px 47px 45px 80.5px 64.5px 43px 54px 42.5px 70px 42.5px 80px;
  justify-items: start;
  font-size: 11.5px;
  letter-spacing: -0.3px;
  line-height: 24px;
}
.tab-list .active {
  font-weight: 600;
  color: #333;
  height: 25px;
  margin-left: -0.5px;
  letter-spacing: -0.4px;
  border-bottom: 2px solid #217346;
}
.share, .comments {
  display: flex;
  align-items: center;
  justify-content: center;
  gap: 3px;
  width: 57px;
  height: 20px;
  padding: 0 1px 0 0;
  border: 1px solid #e3e2e1;
  background: #fff;
  color: #217346;
  font-weight: 600;
  font-size: 11.3px;
  letter-spacing: -0.35px;
}
.comments {
  width: 84px;
  margin-left: 6px;
}

/* ribbon */
.ribbon {
  position: relative;
  height: 77px;
  flex: none;
  display: flex;
  background: #f3f2f1;
  border-bottom: 1px solid #d0d0d0;
}
.group {
  display: flex;
  flex-direction: column;
  height: 74px;
  margin-top: 1px;
  border-right: 1px solid #c6c6c6;
}
.group-body {
  height: 63px;
  flex: none;
  display: flex;
}
.label {
  position: relative;
  line-height: 14px;
  font-size: 9.5px;
  letter-spacing: -0.4px;
  text-align: center;
  white-space: nowrap;
  padding-right: 14px;
}
.label svg {
  position: absolute;
  right: 2px;
  top: 3px;
}
.clipboard { width: 137px; }
.font { width: 188px; }
.alignment { width: 229px; }
.number { width: 125px; }
.styles { width: 159px; }
.cells { width: 118px; }
.editing { width: 166px; }
.ideas { width: 48px; }
.commands { width: 76px; }
.styles .label, .cells .label, .editing .label, .ideas .label, .commands .label {
  padding-right: 0;
}
.commands .label {
  letter-spacing: -0.5px;
}

.paste {
  width: 44px;
  padding: 3px 0 0 4px;
  display: flex;
  flex-direction: column;
  align-items: center;
  color: #aaa;
}
.paste span {
  line-height: 14px;
  margin: 1px 0 2px;
}
.clip-list, .edit-list {
  display: flex;
  flex-direction: column;
}
.clip-list > div, .edit-list > div {
  display: flex;
  align-items: center;
  height: 20px;
}
.copy-chev { margin-left: 7px; }

.rows {
  position: relative;
  flex-direction: column;
  padding-top: 7px;
}
.row {
  display: grid;
  align-items: center;
  justify-items: center;
  height: 18px;
  flex: none;
  margin-bottom: 9px;
}
.font-row1 {
  padding-left: 6px;
  grid-template-columns: 97px 40px 22px 18px;
}
.select {
  width: 100%;
  height: 19px;
  display: flex;
  align-items: center;
  justify-content: space-between;
  padding: 0 1px 0 2px;
  color: #333;
  background: #fff;
  border: 1px solid #c6c6c6;
  letter-spacing: -0.3px;
}
.grow {
  display: flex;
  font-size: 14px;
  line-height: 18px;
  margin-top: -2px;
}
.grow svg { margin: 4px 0 0 1px; }
.shrink { font-size: 12px; }
.font-row2 {
  padding-left: 6px;
  grid-template-columns: 19px 18px 18px 14px 6px 18px 12px 8px 18px 11px 22px 9px;
}
.font-row2 b { font-size: 12px; }
.ital { font-family: "Liberation Serif", serif; font-size: 13px; }
.font-row2 u { font-size: 12px; }
.font-color {
  width: 14px;
  height: 15px;
  text-align: center;
  line-height: 11px;
  font-size: 13px;
  border-bottom: 4px solid #d1181f;
}
.sep {
  width: 1px;
  height: 17px;
  background: #d0d0d0;
}
.align-row {
  padding-left: 6px;
  grid-template-columns: 19px 18px 19px 8px 17px 13px 13px 19px 72px 20px;
}
.align-row .txt {
  justify-self: start;
  white-space: nowrap;
}
.picked {
  width: 18px;
  height: 19px;
  padding: 4px 2px;
  background: #c8c6c4;
}
.indent, .merge-icon { position: relative; }
.indent { left: 3px; }
.merge-icon { left: -1px; }
.tall-sep {
  position: absolute;
  left: 109px;
  top: 5px;
  width: 1px;
  height: 49px;
  background: #d0d0d0;
}
.general {
  width: 112px;
  margin-right: 1px;
}
.number-row {
  padding-left: 5px;
  grid-template-columns: 20px 11px 20px 19px 5px 19px 20px;
}
.number-row text { letter-spacing: -0.6px; }
.sym { font-size: 14px; }

.bigs {
  justify-content: center;
}
.big {
  display: flex;
  flex-direction: column;
  align-items: center;
  padding-top: 3px;
  line-height: 13px;
  letter-spacing: -0.4px;
  white-space: nowrap;
}
.big > svg:first-child { margin-bottom: 1px; }
.big br { display: none; }
.big span {
  display: flex;
  align-items: center;
}
.big span svg { margin-left: 1px; }
.only { margin-top: 2px; }
.styles .big:nth-child(1) { width: 61px; }
.styles .big:nth-child(2) { width: 48px; }
.styles .big:nth-child(3) { width: 36px; }
.cells .big { width: 34.5px; }
.edit-list {
  width: 83px;
  padding-left: 9px;
}
.edit-list > div { height: 19px; }
.edit-list > div > svg:first-child { margin-right: 3px; }
.edit-list svg:last-child { margin-left: 2px; }
.edit-list svg.sum-chev { margin-left: 5px; }
.sort { width: 37px; }
.find { width: 37px; }
.pkg-logo {
  height: 27px;
  padding-top: 4px;
  font-size: 7px;
  line-height: 8px;
  letter-spacing: -0.3px;
  font-style: italic;
  text-align: center;
  color: #4a4a9c;
}
.collapse {
  position: absolute;
  left: 1264px;
  bottom: 1px;
}

/* formula bar */
.formula-bar {
  height: 37px;
  flex: none;
  display: flex;
  align-items: center;
  font-size: 10.5px;
  letter-spacing: 0;
}
.name-box {
  width: 85px;
  height: 20px;
  margin-left: 4px;
  padding: 0 5px 0 4px;
  display: flex;
  align-items: center;
  justify-content: space-between;
  letter-spacing: -0.2px;
  background: #fff;
  border: 1px solid #c9c9c9;
}
.dots {
  width: 2px;
  height: 10px;
  margin: 0 11px;
  background: repeating-linear-gradient(#999 0 2px, transparent 2px 4px);
}
.fx {
  width: 92px;
  height: 20px;
  display: flex;
  align-items: center;
  justify-content: space-between;
  padding: 0 10px 0 9px;
  background: #fff;
  border: 1px solid #c9c9c9;
}
.fx i {
  font-family: "Liberation Serif", serif;
  font-size: 14px;
}
.formula {
  width: 1070px;
  height: 20px;
  margin-left: 1px;
  padding: 0 2px 0 9px;
  display: flex;
  align-items: center;
  justify-content: space-between;
  background: #fff;
  border: 1px solid #c9c9c9;
}

/* sheet */
.sheet {
  position: relative;
  height: 480px;
  flex: none;
  display: flex;
}
.grid {
  width: 1263px;
  overflow: hidden;
  border-bottom: 1px solid #a0a0a0;
  border-right: 1px solid #d0d0d0;
}
.grid-row {
  display: grid;
  grid-template-columns: 53px 336px 409px 128px 128px 128px 128px;
  grid-template-rows: 38.65px;
  height: 38.65px;
}
.head {
  height: 38px;
  grid-template-rows: 38px;
  font-size: 25px;
  line-height: 39px;
  letter-spacing: 0;
  text-align: center;
  color: #111;
}
.head div {
  border-right: 1px solid #c3c3c3;
  border-bottom: 1px solid #9e9e9e;
}
.head .sel {
  color: #1e6b42;
  background: #d0d0d0;
  border-bottom: 2px solid #217346;
}
.head .corner {
  padding: 3px 0 0 18px;
}
.num {
  font-size: 24.5px;
  letter-spacing: -0.2px;
  line-height: 39.4px;
  text-align: center;
  color: #111;
  border-right: 1px solid #9e9e9e;
  border-bottom: 1px solid #c9c9c9;
  background: #e6e6e6;
}
.r11 .num {
  color: #1e6b42;
  background: #d0d0d0;
  border-right: 2px solid #217346;
}
.cell {
  position: relative;
  font-family: Lato, "Liberation Sans", sans-serif;
  font-size: 25.2px;
  line-height: 39.4px;
  letter-spacing: 0;
  font-variant-ligatures: none;
  white-space: nowrap;
  padding-left: 4px;
  color: #000;
  background: #fff;
  border-right: 1px solid #d4d4d4;
  border-bottom: 1px solid #d4d4d4;
}
.cell.words {
  font-size: 26px;
  letter-spacing: 0.35px;
}
.cell.invalid {
  letter-spacing: 0.65px;
}
.cell.c2, .cell.c3 {
  overflow: hidden;
}
.spill {
  z-index: 1;
  border-right-color: #fff;
}
.r1 .cell.words {
  font-weight: bold;
  letter-spacing: 0.65px;
}
.flag::before {
  content: "";
  position: absolute;
  left: 0;
  top: 0;
  border-top: 11px solid #107c10;
  border-right: 11px solid transparent;
}
.active-cell {
  position: absolute;
  left: -2px;
  top: -1px;
  width: 412px;
  height: 41px;
  border: 2px solid #1e7145;
}
.active-cell::after {
  content: "";
  position: absolute;
  right: -3px;
  bottom: -3px;
  width: 5px;
  height: 5px;
  background: #1e7145;
  border: 1px solid #fff;
  border-width: 1px 0 0 1px;
}
.r11 .invalid {
  z-index: 2;
}
.autofill {
  position: absolute;
  left: 410px;
  top: 23px;
}
.cursor {
  position: absolute;
  left: 712px;
  top: 338px;
}
.sb-btn {
  width: 12px;
  height: 12px;
  display: flex;
  align-items: center;
  justify-content: center;
  background: #fff;
  border: 1px solid #c6c6c6;
}
.vscroll {
  width: 17px;
  padding: 1px 2px 0 3px;
  display: flex;
  flex-direction: column;
}
.vthumb {
  flex: 1;
  background: linear-gradient(#fff 217px, #c0c0c0 217px 218px, #d9d9d9 218px);
  border: solid #c0c0c0;
  border-width: 1px 1px 0 1px;
}

/* sheet tabs */
.sheet-tabs {
  height: 19px;
  flex: none;
  display: flex;
  align-items: center;
  border-bottom: 1px solid #d4d4d4;
}
.nav { margin-left: 18px; }
.sheet-tab {
  width: 52px;
  height: 18px;
  margin: -2px 0 0 27px;
  line-height: 15px;
  text-align: center;
  font-weight: bold;
  font-size: 11px;
  letter-spacing: -0.3px;
  color: #1e7145;
  background: #fff;
  border-bottom: 2px solid #4f8f6c;
}
.add { margin-left: 22px; }
.sheet-tabs .dots {
  margin: 0 10px 0 609px;
}
.hscroll {
  display: flex;
  width: 485px;
  background: #d9d9d9;
}
.hthumb {
  width: 402px;
  background: #fff;
  border-right: 1px solid #999;
  margin-right: auto;
}

/* status bar */
.status {
  height: 18px;
  flex: none;
  display: flex;
  align-items: center;
  background: #f3f2f1;
}
.macro { margin: 0 1012px 0 6px; }
.view {
  width: 33.5px;
  height: 18px;
  display: flex;
  align-items: center;
  justify-content: center;
}
.view.on { background: #c8c6c4; }
.zoom {
  display: flex;
  align-items: center;
  width: 108px;
  margin-left: 4px;
  font-size: 14px;
}
.slider {
  flex: 1;
  height: 1px;
  margin: 0 4px;
  background: #a0a0a0;
}
.slider i {
  display: block;
  width: 4px;
  height: 10px;
  margin: -5px 0 0 59px;
  background: #666;
}
.pct {
  margin-left: 7px;
  font-size: 9.5px;
}

/* taskbar */
.taskbar {
  height: 33px;
  flex: none;
  display: flex;
  color: #fff;
  background: linear-gradient(90deg, #12161c, #1c2833 33%, #1b1e22 65%, #1c2430 72%, #182534);
}
.start {
  width: 40px;
  display: flex;
  align-items: center;
  justify-content: center;
}
.task-search {
  width: 286px;
  display: flex;
  align-items: center;
  gap: 9px;
  padding: 0 0 1px 10px;
  font-size: 13px;
  letter-spacing: -0.5px;
  color: #333;
  background: #f2f2f2;
}
.apps {
  display: flex;
}
.apps > div {
  width: 41.3px;
  padding-bottom: 1px;
  display: flex;
  align-items: center;
  justify-content: center;
}
.apps .open {
  background: linear-gradient(#76b9ed, #76b9ed) bottom / 34px 2px no-repeat;
}
.apps .current {
  background: linear-gradient(#76b9ed, #76b9ed) bottom / 40px 2px no-repeat, #474a4e;
}
.tray {
  margin-left: auto;
  padding-right: 14px;
  display: flex;
  align-items: center;
  gap: 13px;
}
.pen { margin: 0 0 0 3px; }
.clock {
  width: 51px;
  font-size: 10.8px;
  line-height: 15px;
  letter-spacing: -0.55px;
  text-align: center;
  margin-top: -1px;
}
.notif {
  position: relative;
  width: 19px;
}
.notif b {
  position: absolute;
  left: 7px;
  top: 5px;
  width: 13px;
  height: 13px;
  line-height: 11px;
  border: 1px solid #aaa;
  border-radius: 50%;
  text-align: center;
  font-size: 9px;
  background: #1b2431;
}
```
